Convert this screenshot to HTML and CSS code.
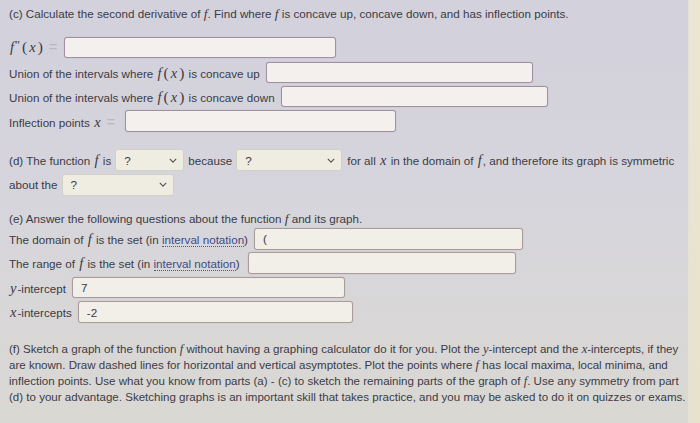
FILE: index.html
```html
<!DOCTYPE html>
<html>
<head>
<meta charset="utf-8">
<link rel="stylesheet" href="styles.css">
</head>
<body>
<div class="screen">
  <div class="page">
    <p class="title c-title">(c) Calculate the second derivative of <i class="m">f</i>. Find where <i class="m">f</i> is concave up, concave down, and has inflection points.</p>
    <div class="row r-first"><span class="lbl"><i class="m">f</i><span class="pr">″</span><span class="paren">(</span><i class="m">x</i><span class="paren">)</span><span class="eq">=</span></span><span class="inp w-fpp"></span></div>
    <div class="row"><span class="lbl">Union of the intervals where <i class="m">f</i><span class="paren">(</span><i class="m">x</i><span class="paren">)</span> is concave up</span><span class="inp w-up"></span></div>
    <div class="row"><span class="lbl">Union of the intervals where <i class="m">f</i><span class="paren">(</span><i class="m">x</i><span class="paren">)</span> is concave down</span><span class="inp w-down"></span></div>
    <div class="row"><span class="lbl lbl-wide">Inflection points <i class="m">x</i><span class="eq">=</span></span><span class="inp w-inf"></span></div>

    <div class="row r-d1"><span class="lbl lbl-s">(d) The function <i class="m">f</i> is</span><span class="sel w-s1"><span>?</span><svg class="chev" viewBox="0 0 10 6" width="8" height="5"><path d="M1 1l4 4 4-4" fill="none" stroke="#555" stroke-width="1.4"/></svg></span><span class="lbl lbl-s">because</span><span class="sel w-s2"><span>?</span><svg class="chev" viewBox="0 0 10 6" width="8" height="5"><path d="M1 1l4 4 4-4" fill="none" stroke="#555" stroke-width="1.4"/></svg></span><span class="lbl">for all <i class="m">x</i> in the domain of <i class="m">f</i>, and therefore its graph is symmetric</span></div>
    <div class="row"><span class="lbl lbl-s">about the</span><span class="sel w-s3"><span>?</span><svg class="chev" viewBox="0 0 10 6" width="8" height="5"><path d="M1 1l4 4 4-4" fill="none" stroke="#555" stroke-width="1.4"/></svg></span></div>

    <p class="title e-title">(e) Answer the following questions about the function <i class="m">f</i> and its graph.</p>
    <div class="row r-e"><span class="lbl">The domain of <i class="m">f</i> is the set (in <span class="link">interval notation</span>)</span><span class="inp lo w-dom">(</span></div>
    <div class="row r-e"><span class="lbl lbl-r">The range of <i class="m">f</i> is the set (in <span class="link">interval notation</span>)</span><span class="inp lo w-rng"></span></div>
    <div class="row r-e"><span class="lbl"><i class="m">y</i>-intercept</span><span class="inp lo w-yi">7</span></div>
    <div class="row r-e"><span class="lbl"><i class="m">x</i>-intercepts</span><span class="inp lo w-xi">-2</span></div>

    <p class="para">(f) Sketch a graph of the function <i class="m">f</i> without having a graphing calculator do it for you. Plot the <i class="m">y</i>-intercept and the <i class="m">x</i>-intercepts, if they are known. Draw dashed lines for horizontal and vertical asymptotes. Plot the points where <i class="m">f</i> has local maxima, local minima, and inflection points. Use what you know from parts (a) - (c) to sketch the remaining parts of the graph of <i class="m">f</i>. Use any symmetry from part (d) to your advantage. Sketching graphs is an important skill that takes practice, and you may be asked to do it on quizzes or exams.</p>
  </div>
  <div class="edge"></div>
</div>
</body>
</html>
```
FILE: styles.css
```css
html, body {
  margin: 0;
  padding: 0;
}
body {
  width: 700px;
  height: 423px;
  overflow: hidden;
  font-family: "Liberation Sans", Arial, sans-serif;
  font-size: 11.65px;
  color: #3b3b45;
}
.screen {
  display: flex;
  height: 423px;
}
.page {
  flex: 1;
  min-width: 0;
  padding-left: 9px;
  background: linear-gradient(180deg, #d2d1dc 0%, #d6d5dc 45%, #dad8d3 100%);
  border-right: 1px solid #e4e1dc;
}
.edge {
  width: 11px;
  flex: none;
  background: linear-gradient(180deg, #ebe5d1 0%, #e7e1cd 100%);
}
.title {
  margin: 0;
  line-height: 16px;
}
.c-title { margin-top: 6px; }
.e-title { margin-top: 13.5px; }
.row {
  display: flex;
  align-items: center;
  height: 24.5px;
  white-space: nowrap;
}
.r-first { margin-top: 13px; height: 25px; }
.r-d1 { margin-top: 14px; height: 25px; }
.row .lbl { margin-right: 6px; }
.row .lbl-s { margin-right: 4px; }
.row .lbl-wide { margin-right: 10px; }
.row .lbl-r { margin-right: 8px; }
.m {
  font-family: "Liberation Serif", "Times New Roman", serif;
  font-style: italic;
  font-size: 14.5px;
  line-height: 1;
  padding: 0 1px;
}
.paren {
  font-family: "Liberation Serif", serif;
  font-size: 15.5px;
  line-height: 1;
  padding: 0 1px;
}
.pr {
  font-family: "Liberation Serif", serif;
  font-size: 12px;
  position: relative;
  top: -3px;
  margin-right: 1px;
}
.eq {
  color: #b9b8c2;
  font-size: 15px;
  line-height: 1;
  margin: 0 0 0 5px;
}
.inp {
  box-sizing: border-box;
  height: 21px;
  background: #f3f0ee;
  border: 1px solid #a28fa1;
  border-radius: 3px;
  box-shadow: 0 0 1px rgba(120, 90, 120, 0.4);
  padding-left: 8px;
  display: flex;
  align-items: center;
}
.inp.lo {
  background: #f2efe8;
  border-color: #ab9c9c;
}
.w-fpp { width: 272px; }
.w-up { width: 267px; }
.w-down { width: 267px; }
.w-inf { width: 271px; height: 22px; }
.w-dom { width: 269px; height: 22px; }
.w-rng { width: 268px; height: 22px; }
.w-yi { width: 273px; }
.w-xi { width: 275px; height: 22px; }
.sel {
  box-sizing: border-box;
  height: 22px;
  background: #efede2;
  border: 1px solid #d3d0c6;
  border-radius: 3px;
  display: flex;
  align-items: center;
  justify-content: space-between;
  padding: 0 6px 0 8px;
  margin-right: 4px;
}
.w-s1 { width: 69px; }
.w-s2 { width: 106px; margin-right: 5px; }
.w-s3 { width: 112px; }
.chev { display: block; }
.link {
  color: #3d4b8a;
  border-bottom: 1.5px dotted #4a5aa0;
}
.para {
  margin: 16px 0 0 0;
  line-height: 16px;
  width: 683px;
  font-size: 11.55px;
}
.para .m {
  font-size: 12.5px;
  padding: 0;
}
.title .m { font-size: 13.5px; padding: 0; }
```
